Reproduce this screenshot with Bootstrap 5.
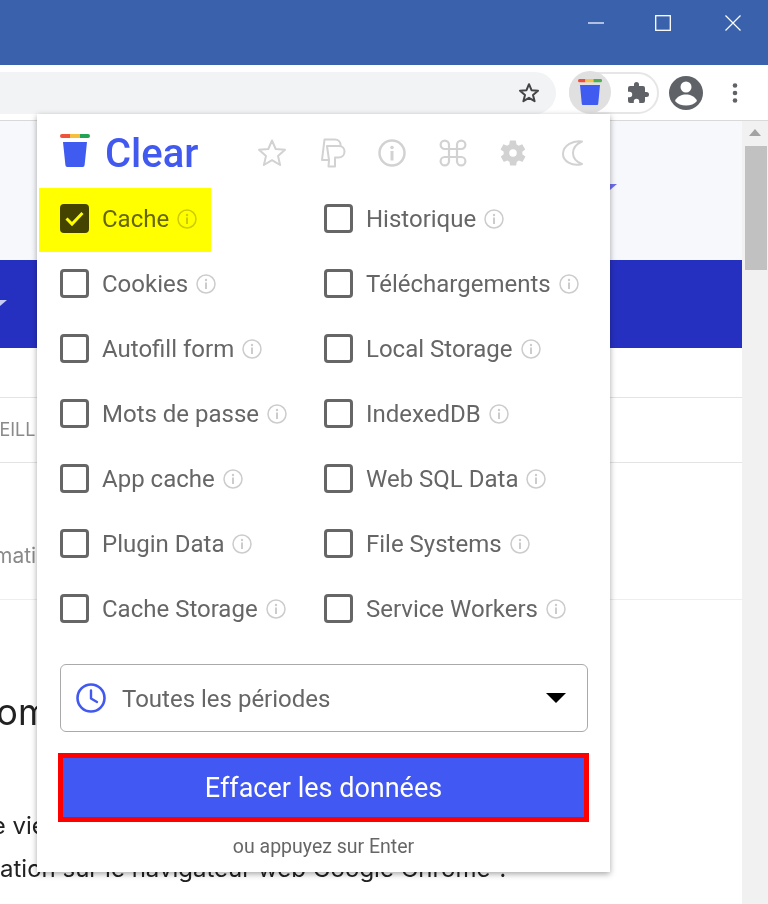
<!DOCTYPE html>
<html lang="fr">
<head>
<meta charset="utf-8">
<title>Clear</title>
<link href="https://cdn.jsdelivr.net/npm/bootstrap@5.3.0/dist/css/bootstrap.min.css" rel="stylesheet">
<style>
html,body{height:904px;overflow:hidden;background:#fff}
body{font-family:Roboto,"Liberation Sans",sans-serif;position:relative}
.titlebar{height:65px;background:#3a62ac}
.winbtn{width:70px;height:46px}
.winbtn.winmin{width:64px}
.toolbar{height:56px;background:#fff;border-bottom:1px solid #d9d9d9;padding-top:7px}
.omni{width:556px;height:42px;background:#f1f3f4;border-radius:0 21px 21px 0;padding-right:15px}
.extpill{margin-left:13px;width:90px;height:42px;border:2px solid #e6e6e6;border-radius:21px;padding-right:7px}
.extactive{width:42px;height:42px;margin:-2px 0 0 -2px;border-radius:50%;background:#e0e0e0}
.avatarbox{margin-left:10px;width:34px}
.dotsbox{width:6px;margin-right:30px}
.stage{height:783px;overflow:hidden}
.webpage{width:742px;overflow:hidden;font-family:Inter,"Liberation Sans",sans-serif;color:#222}
.pagehead{height:139px;background:#f7f8fb;padding-top:63px}
.headcaret{width:0;height:0;margin-left:610px;border-top:6px solid #6f6ff0;border-left:0 solid transparent;border-right:7px solid transparent}
.band{height:88px;background:#2530c0;width:742px;padding-top:40px}
.bandcaret{width:0;height:0;margin-left:-7px;border-top:6px solid #c9ccf2;border-left:7px solid transparent;border-right:7px solid transparent}
.crumb{margin-top:49px;height:66px;border-top:1px solid #e4e4e4;border-bottom:1px solid #e4e4e4;line-height:64px;font-size:18px;color:#8a8a8a;white-space:nowrap;text-indent:-13px}
.infos{height:137px;border-bottom:1px solid #eee;padding-top:78px;line-height:30px;font-size:21px;color:#8a8a8a;white-space:nowrap;text-indent:-52px}
.headline{margin-top:86px;height:52px;line-height:52px;font-size:36px;white-space:nowrap;text-indent:-30px;color:#222}
.para1{margin-top:66px;height:43px;line-height:43px;font-size:24px;white-space:nowrap;text-indent:-22px}
.para2{height:43px;line-height:43px;font-size:24px;white-space:nowrap}
.scrolltrack{width:26px;background:#f1f1f1;padding-top:8px}
.scrollup{width:0;height:0;margin:0 auto;border-bottom:7px solid #a3a3a3;border-left:6px solid transparent;border-right:6px solid transparent}
.scrollthumb{height:124px;background:#c1c1c1;margin:10px 1px 0 3px}
.popup{position:absolute;left:37px;top:114px;width:573px;height:758px;background:#fff;box-shadow:0 2px 6px rgba(0,0,0,.35);padding:0 22px 0 23px;color:#666}
.pophead{height:72px;padding-top:20px}
.brand{font-size:40px;font-weight:500;color:#4159ef;line-height:40px;margin-left:15px}
.toolicons{width:331px;height:38px}
.choice{height:65px}
.choice .form-check-input{width:29px;height:29px;margin:0 -1px 0 0;border:3px solid #666;border-radius:4px;background-color:#fff;flex:none;box-shadow:none}
.choice .form-check-input:checked{background-color:#444;border-color:#444;background-size:23px 23px;
background-image:url("data:image/svg+xml,%3csvg xmlns='http://www.w3.org/2000/svg' viewBox='0 0 23 23'%3e%3cpath d='M3.500 11.500l5.500 5.500 10.500-11' fill='none' stroke='%23fff' stroke-width='3'/%3e%3c/svg%3e")}
.choice .form-check-label{font-size:24px;color:#666;margin-left:14px;line-height:30px;opacity:1}
.tip{margin-left:8px;flex:none}
.hilite{position:absolute;left:2px;top:74px;width:172px;height:64px;background:#ff0;mix-blend-mode:multiply;pointer-events:none}
.periodwrap{margin-top:23px;position:relative}
.periodwrap .form-select{height:68px;padding:2px 50px 0 61px;font-size:24px;color:#666;border:1px solid #aaa;border-radius:6px;background-size:20px 10px;background-position:right 21px center;font-family:Roboto,sans-serif;box-shadow:none;
background-image:url("data:image/svg+xml,%3csvg xmlns='http://www.w3.org/2000/svg' viewBox='0 0 20 10'%3e%3cpath d='M0 0h20L10 10z' fill='%23000'/%3e%3c/svg%3e")}
.clockmark{position:absolute;left:16px;top:19px;pointer-events:none}
.wipe.btn{display:block;width:531px;height:69px;margin:21px 0 0 -2px;background:#4258f2;border:5px solid #f00;border-radius:0;color:#fff;font-size:27px;padding:2px 0 0;line-height:1}
.hint{font-size:19.500px;color:#666;text-align:center;line-height:22px;margin-top:14px;margin-left:-1px}
</style>
</head>
<body>
<div class="titlebar d-flex justify-content-end">
  <div class="winbtn winmin d-flex align-items-center justify-content-center"><svg width="16" height="2"><path d="M0 1h16" stroke="#fff" stroke-width="1.2"/></svg></div>
  <div class="winbtn d-flex align-items-center justify-content-center"><svg width="16" height="16"><rect x=".7" y=".7" width="14.6" height="14.6" fill="none" stroke="#fff" stroke-width="1.3"/></svg></div>
  <div class="winbtn d-flex align-items-center justify-content-center"><svg width="16" height="16"><path d="M.5.5l15 15M15.500 .5l-15 15" stroke="#fff" stroke-width="1.2"/></svg></div>
</div>
<div class="toolbar d-flex align-items-start">
  <div class="omni d-flex align-items-center justify-content-end">
    <svg width="24" height="24" viewBox="0 0 24 24"><path d="M12 3.200l2.500 6 6.500.5-5 4.200 1.600 6.300L12 16.800l-5.600 3.400 1.600-6.300-5-4.200 6.500-.5z" fill="none" stroke="#444" stroke-width="2" stroke-linejoin="round"/></svg>
  </div>
  <div class="extpill d-flex align-items-center justify-content-between flex-shrink-0">
    <div class="extactive d-flex align-items-center justify-content-center">
      <svg width="26" height="26" viewBox="0 0 26 26"><path d="M1 1.500a1.500 1.500 0 0 1 1.500-1.500H8.500v3.200H2.500A1.500 1.500 0 0 1 1 1.700z" fill="#ea4f3b"/><path d="M8.500 0h8v3.200h-8z" fill="#f6c343"/><path d="M16.500 0h7a1.500 1.500 0 0 1 1.500 1.700 1.500 1.500 0 0 1-1.500 1.500h-7z" fill="#4caf50"/><path d="M3 6h20l-1.800 19a1.200 1.200 0 0 1-1.200 1H6a1.200 1.200 0 0 1-1.200-1z" fill="#3f5bf0"/></svg>
    </div>
    <svg width="24" height="24" viewBox="0 0 24 24"><path d="M20.500 11H19V7a2 2 0 0 0-2-2h-4V3.500a2.500 2.500 0 0 0-5 0V5H4a2 2 0 0 0-2 2v3.800h1.500a2.700 2.700 0 0 1 0 5.400H2V20a2 2 0 0 0 2 2h3.800v-1.500a2.700 2.700 0 0 1 5.400 0V22H17a2 2 0 0 0 2-2v-4h1.500a2.500 2.500 0 0 0 0-5z" fill="#5f6368"/></svg>
  </div>
  <div class="avatarbox flex-shrink-0"><svg width="34" height="42" viewBox="0 0 34 42"><circle cx="17" cy="21" r="17" fill="#5f6368"/><circle cx="17" cy="15" r="5.500" fill="#fff"/><path d="M6 29c2-5 7-6.500 11-6.500S26 24 28 29c-2.500 3-6.500 4.500-11 4.500S8.500 32 6 29z" fill="#fff"/></svg></div>
  <div class="dotsbox flex-shrink-0 ms-auto"><svg width="6" height="42" viewBox="0 0 6 42"><circle cx="3" cy="13.500" r="2.300" fill="#5f6368"/><circle cx="3" cy="21" r="2.300" fill="#5f6368"/><circle cx="3" cy="28.500" r="2.300" fill="#5f6368"/></svg></div>
</div>
<div class="stage d-flex">
  <div class="webpage flex-shrink-0">
    <div class="pagehead"><div class="headcaret"></div></div>
    <div class="band"><div class="bandcaret"></div></div>
    <div class="crumb">VEILLE</div>
    <div class="infos">Informations</div>
    <div class="headline">Comment</div>
    <div class="para1">Je vie</div>
    <div class="para2">ation sur le navigateur web Google Chrome ?</div>
  </div>
  <div class="scrolltrack flex-grow-1">
    <div class="scrollup"></div>
    <div class="scrollthumb"></div>
  </div>
</div>

<div class="popup">
  <div class="pophead d-flex align-items-start">
    <svg width="30" height="33" viewBox="0 0 30 33" class="flex-shrink-0"><path d="M0 2a2 2 0 0 1 2-2h8v4H2a2 2 0 0 1-2-2z" fill="#f0533c"/><path d="M10 0h10v4H10z" fill="#f6bf3f"/><path d="M20 0h8a2 2 0 0 1 2 2 2 2 0 0 1-2 2h-8z" fill="#23a455"/><path d="M3 8h24l-2.400 23a2 2 0 0 1-2 2H7.400a2 2 0 0 1-2-2z" fill="#3f5bf0"/></svg>
    <div class="brand">Clear</div>
    <div class="toolicons d-flex justify-content-between align-items-center ms-auto">
      <svg width="30" height="30" viewBox="0 0 30 30"><path d="M15 2.500l3.700 8.500 9.300.8-7 6.100 2.100 9.100-8.100-4.800-8.100 4.800 2.100-9.100-7-6.100 9.300-.8z" fill="none" stroke="#d2d2d2" stroke-width="2" stroke-linejoin="round"/></svg>
      <svg width="30" height="30" viewBox="0 0 30 30"><path d="M12.500 22H5L7.500 1.500H18c3.500 0 5.500 2.500 5.500 5.500v1" fill="none" stroke="#d2d2d2" stroke-width="2" stroke-linejoin="round"/><path d="M10 8h12c3.500 0 5.500 2.500 5.500 5.500 0 3.500-2.500 6-6 6H18v9h-6.500L12 22z" fill="none" stroke="#d2d2d2" stroke-width="2" stroke-linejoin="round"/></svg>
      <svg width="30" height="30" viewBox="0 0 30 30"><circle cx="15" cy="15" r="12.500" fill="none" stroke="#d2d2d2" stroke-width="2.500"/><path d="M13.500 13h3v9.500h-3z" fill="#d2d2d2"/><circle cx="15" cy="9.500" r="1.800" fill="#d2d2d2"/></svg>
      <svg width="30" height="30" viewBox="0 0 30 30"><path d="M11 11h8v8h-8zM11 11H6.800A4.200 4.200 0 1 1 11 6.800zM19 11V6.800A4.200 4.200 0 1 1 23.200 11zM19 19h4.200A4.200 4.200 0 1 1 19 23.200zM11 19v4.200A4.200 4.200 0 1 1 6.800 19z" fill="none" stroke="#d2d2d2" stroke-width="2.200"/></svg>
      <svg width="30" height="30" viewBox="0 0 24 24"><path fill="#d2d2d2" fill-rule="evenodd" d="M19.400 13c.1-.3.100-.7.100-1s0-.7-.1-1l2.100-1.600c.2-.2.200-.4.100-.6l-2-3.500c-.1-.2-.4-.3-.6-.2l-2.500 1c-.5-.4-1.100-.7-1.700-1l-.4-2.600c0-.3-.2-.5-.5-.5h-4c-.3 0-.5.200-.5.500l-.4 2.600c-.6.300-1.200.6-1.700 1l-2.500-1c-.2-.1-.5 0-.6.200l-2 3.500c-.1.200-.1.400.1.600L4.600 11c-.1.300-.1.700-.1 1s0 .7.100 1l-2.100 1.600c-.2.200-.2.400-.1.600l2 3.500c.1.200.4.300.6.200l2.500-1c.5.400 1.100.7 1.700 1l.4 2.600c0 .3.200.5.500.5h4c.3 0 .5-.2.500-.5l.4-2.600c.6-.3 1.200-.6 1.700-1l2.500 1c.2.100.5 0 .6-.2l2-3.500c.1-.2.100-.4-.1-.6zM12 15a3 3 0 1 1 0-6 3 3 0 0 1 0 6z"/></svg>
      <svg width="30" height="30" viewBox="0 0 30 30"><path d="M24 3.500C15 2 5.500 7.500 5 15.500c-.3 7.500 9 13.500 19 10.500-5.500-2-9-6-9-11 0-4.500 3.500-9 9-11.500z" fill="none" stroke="#d2d2d2" stroke-width="2" stroke-linejoin="round"/></svg>
    </div>
  </div>

  <div class="row g-0">
    <div class="col-6"><div class="choice d-flex align-items-center"><input class="form-check-input" type="checkbox" id="c1" checked><label class="form-check-label" for="c1">Cache</label><svg class="tip" width="20" height="20" viewBox="0 0 20 20"><circle cx="10" cy="10" r="9" fill="none" stroke="#ccc" stroke-width="1.500"/><path d="M9 8.500h2v6.500H9z" fill="#ccc"/><circle cx="10" cy="6" r="1.200" fill="#ccc"/></svg></div></div>
    <div class="col-6"><div class="choice d-flex align-items-center"><input class="form-check-input" type="checkbox" id="c2"><label class="form-check-label" for="c2">Historique</label><svg class="tip" width="20" height="20" viewBox="0 0 20 20"><circle cx="10" cy="10" r="9" fill="none" stroke="#ccc" stroke-width="1.500"/><path d="M9 8.500h2v6.500H9z" fill="#ccc"/><circle cx="10" cy="6" r="1.200" fill="#ccc"/></svg></div></div>
    <div class="col-6"><div class="choice d-flex align-items-center"><input class="form-check-input" type="checkbox" id="c3"><label class="form-check-label" for="c3">Cookies</label><svg class="tip" width="20" height="20" viewBox="0 0 20 20"><circle cx="10" cy="10" r="9" fill="none" stroke="#ccc" stroke-width="1.500"/><path d="M9 8.500h2v6.500H9z" fill="#ccc"/><circle cx="10" cy="6" r="1.200" fill="#ccc"/></svg></div></div>
    <div class="col-6"><div class="choice d-flex align-items-center"><input class="form-check-input" type="checkbox" id="c4"><label class="form-check-label" for="c4">Téléchargements</label><svg class="tip" width="20" height="20" viewBox="0 0 20 20"><circle cx="10" cy="10" r="9" fill="none" stroke="#ccc" stroke-width="1.500"/><path d="M9 8.500h2v6.500H9z" fill="#ccc"/><circle cx="10" cy="6" r="1.200" fill="#ccc"/></svg></div></div>
    <div class="col-6"><div class="choice d-flex align-items-center"><input class="form-check-input" type="checkbox" id="c5"><label class="form-check-label" for="c5">Autofill form</label><svg class="tip" width="20" height="20" viewBox="0 0 20 20"><circle cx="10" cy="10" r="9" fill="none" stroke="#ccc" stroke-width="1.500"/><path d="M9 8.500h2v6.500H9z" fill="#ccc"/><circle cx="10" cy="6" r="1.200" fill="#ccc"/></svg></div></div>
    <div class="col-6"><div class="choice d-flex align-items-center"><input class="form-check-input" type="checkbox" id="c6"><label class="form-check-label" for="c6">Local Storage</label><svg class="tip" width="20" height="20" viewBox="0 0 20 20"><circle cx="10" cy="10" r="9" fill="none" stroke="#ccc" stroke-width="1.500"/><path d="M9 8.500h2v6.500H9z" fill="#ccc"/><circle cx="10" cy="6" r="1.200" fill="#ccc"/></svg></div></div>
    <div class="col-6"><div class="choice d-flex align-items-center"><input class="form-check-input" type="checkbox" id="c7"><label class="form-check-label" for="c7">Mots de passe</label><svg class="tip" width="20" height="20" viewBox="0 0 20 20"><circle cx="10" cy="10" r="9" fill="none" stroke="#ccc" stroke-width="1.500"/><path d="M9 8.500h2v6.500H9z" fill="#ccc"/><circle cx="10" cy="6" r="1.200" fill="#ccc"/></svg></div></div>
    <div class="col-6"><div class="choice d-flex align-items-center"><input class="form-check-input" type="checkbox" id="c8"><label class="form-check-label" for="c8">IndexedDB</label><svg class="tip" width="20" height="20" viewBox="0 0 20 20"><circle cx="10" cy="10" r="9" fill="none" stroke="#ccc" stroke-width="1.500"/><path d="M9 8.500h2v6.500H9z" fill="#ccc"/><circle cx="10" cy="6" r="1.200" fill="#ccc"/></svg></div></div>
    <div class="col-6"><div class="choice d-flex align-items-center"><input class="form-check-input" type="checkbox" id="c9"><label class="form-check-label" for="c9">App cache</label><svg class="tip" width="20" height="20" viewBox="0 0 20 20"><circle cx="10" cy="10" r="9" fill="none" stroke="#ccc" stroke-width="1.500"/><path d="M9 8.500h2v6.500H9z" fill="#ccc"/><circle cx="10" cy="6" r="1.200" fill="#ccc"/></svg></div></div>
    <div class="col-6"><div class="choice d-flex align-items-center"><input class="form-check-input" type="checkbox" id="c10"><label class="form-check-label" for="c10">Web SQL Data</label><svg class="tip" width="20" height="20" viewBox="0 0 20 20"><circle cx="10" cy="10" r="9" fill="none" stroke="#ccc" stroke-width="1.500"/><path d="M9 8.500h2v6.500H9z" fill="#ccc"/><circle cx="10" cy="6" r="1.200" fill="#ccc"/></svg></div></div>
    <div class="col-6"><div class="choice d-flex align-items-center"><input class="form-check-input" type="checkbox" id="c11"><label class="form-check-label" for="c11">Plugin Data</label><svg class="tip" width="20" height="20" viewBox="0 0 20 20"><circle cx="10" cy="10" r="9" fill="none" stroke="#ccc" stroke-width="1.500"/><path d="M9 8.500h2v6.500H9z" fill="#ccc"/><circle cx="10" cy="6" r="1.200" fill="#ccc"/></svg></div></div>
    <div class="col-6"><div class="choice d-flex align-items-center"><input class="form-check-input" type="checkbox" id="c12"><label class="form-check-label" for="c12">File Systems</label><svg class="tip" width="20" height="20" viewBox="0 0 20 20"><circle cx="10" cy="10" r="9" fill="none" stroke="#ccc" stroke-width="1.500"/><path d="M9 8.500h2v6.500H9z" fill="#ccc"/><circle cx="10" cy="6" r="1.200" fill="#ccc"/></svg></div></div>
    <div class="col-6"><div class="choice d-flex align-items-center"><input class="form-check-input" type="checkbox" id="c13"><label class="form-check-label" for="c13">Cache Storage</label><svg class="tip" width="20" height="20" viewBox="0 0 20 20"><circle cx="10" cy="10" r="9" fill="none" stroke="#ccc" stroke-width="1.500"/><path d="M9 8.500h2v6.500H9z" fill="#ccc"/><circle cx="10" cy="6" r="1.200" fill="#ccc"/></svg></div></div>
    <div class="col-6"><div class="choice d-flex align-items-center"><input class="form-check-input" type="checkbox" id="c14"><label class="form-check-label" for="c14">Service Workers</label><svg class="tip" width="20" height="20" viewBox="0 0 20 20"><circle cx="10" cy="10" r="9" fill="none" stroke="#ccc" stroke-width="1.500"/><path d="M9 8.500h2v6.500H9z" fill="#ccc"/><circle cx="10" cy="6" r="1.200" fill="#ccc"/></svg></div></div>
  </div>
  <div class="hilite"></div>

  <div class="periodwrap">
    <select class="form-select" aria-label="Période"><option>Toutes les périodes</option></select>
    <svg class="clockmark" width="30" height="30" viewBox="0 0 30 30"><circle cx="15" cy="15" r="13.500" fill="none" stroke="#4159ef" stroke-width="2.600"/><path d="M15 7.500V15.500l6 3.500" fill="none" stroke="#4159ef" stroke-width="2.400" stroke-linecap="round" stroke-linejoin="round"/></svg>
  </div>
  <button type="button" class="btn wipe">Effacer les données</button>
  <div class="hint">ou appuyez sur Enter</div>
</div>
<script src="https://cdn.jsdelivr.net/npm/bootstrap@5.3.0/dist/js/bootstrap.bundle.min.js"></script>
</body>
</html>
